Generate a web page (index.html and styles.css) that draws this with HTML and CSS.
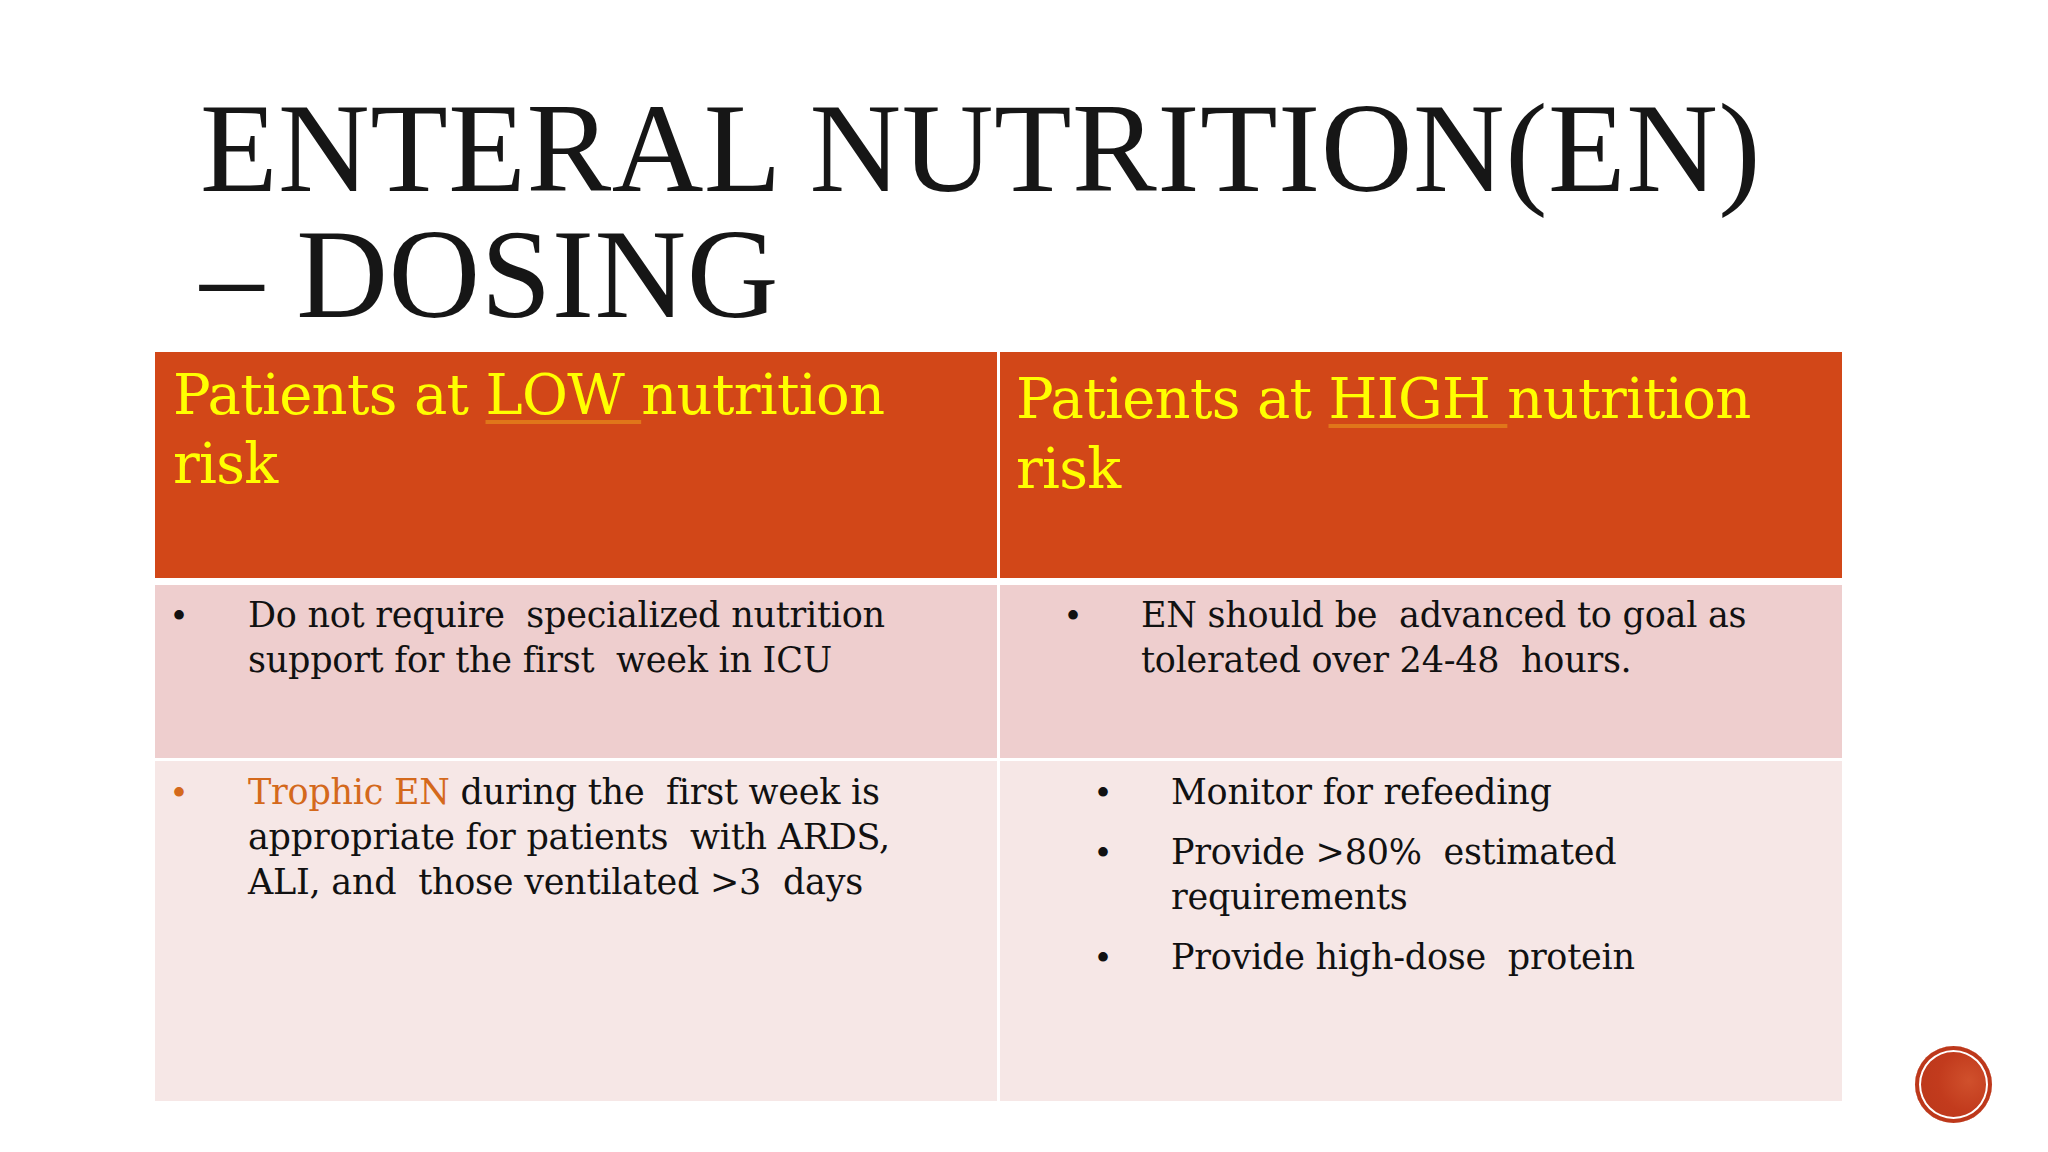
FILE: index.html
```html
<!DOCTYPE html>
<html lang="en">
<head>
<meta charset="utf-8">
<title>Enteral Nutrition (EN) – Dosing</title>
<link rel="stylesheet" href="styles.css">
</head>
<body>
<div class="slide">
  <h1 class="title">ENTERAL NUTRITION(EN)<br>– DOSING</h1>
  <div class="table">
    <div class="cell head head-left">Patients at <span class="u">LOW </span>nutrition<br>risk</div>
    <div class="cell head head-right">Patients at <span class="u">HIGH </span>nutrition<br>risk</div>

    <div class="cell row1 left">
      <ul class="list list-left">
        <li><span class="dot">•</span><span class="txt">Do not require&nbsp; specialized nutrition support for the first&nbsp; week in ICU</span></li>
      </ul>
    </div>
    <div class="cell row1 right">
      <ul class="list list-r1">
        <li><span class="dot">•</span><span class="txt">EN should be&nbsp; advanced to goal as tolerated over 24-48&nbsp; hours.</span></li>
      </ul>
    </div>

    <div class="cell row2 left">
      <ul class="list list-left">
        <li><span class="dot accent">•</span><span class="txt"><span class="accent">Trophic EN</span> during the&nbsp; first week is appropriate for patients&nbsp; with ARDS, ALI, and&nbsp; those ventilated &gt;3&nbsp; days</span></li>
      </ul>
    </div>
    <div class="cell row2 right">
      <ul class="list list-r2">
        <li><span class="dot">•</span><span class="txt">Monitor for refeeding</span></li>
        <li><span class="dot">•</span><span class="txt">Provide &gt;80%&nbsp; estimated requirements</span></li>
        <li><span class="dot">•</span><span class="txt">Provide high-dose&nbsp; protein</span></li>
      </ul>
    </div>
  </div>
  <div class="slide-num"></div>
</div>
</body>
</html>
```

FILE: styles.css
```css
* { box-sizing: border-box; }

html, body {
  margin: 0;
  padding: 0;
  background: #ffffff;
}

.slide {
  position: relative;
  width: 2048px;
  height: 1152px;
  overflow: hidden;
  background: #ffffff;
  padding-top: 85px;
}

.title {
  margin: 0 0 15px 0;
  padding-left: 200px;
  font-family: "Liberation Serif", "Times New Roman", serif;
  font-weight: normal;
  font-size: 127px;
  line-height: 126px;
  color: #161616;
  letter-spacing: 0.5px;
  height: 252px;
}

.table {
  margin-left: 155px;
  width: 1687px;
  display: grid;
  grid-template-columns: 842px 842px;
  grid-template-rows: 230px 173px 340px;
  column-gap: 3px;
  row-gap: 3px;
  background: #ffffff;
}

.cell {
  font-family: "DejaVu Serif", "Liberation Serif", serif;
}

.head {
  background: #d24718;
  border-bottom: 4px solid #ffffff;
  color: #ffff00;
  font-size: 56px;
  line-height: 69px;
  letter-spacing: -0.7px;
  padding-top: 8px;
}

.head-left { padding-left: 18px; }
.head-right { padding-left: 16px; padding-top: 12px; line-height: 70px; }

.u {
  text-decoration: underline;
  text-decoration-color: #e0761a;
  text-decoration-thickness: 4px;
  text-underline-offset: 6px;
}

.row1 { background: #eecece; }
.row2 { background: #f6e7e6; }

.list {
  list-style: none;
  margin: 0;
  padding: 0;
  font-size: 35px;
  line-height: 45px;
  letter-spacing: -0.25px;
  color: #111111;
}

.list li {
  display: flex;
  align-items: flex-start;
}

.list li + li { margin-top: 15px; }

.dot {
  flex: none;
  font-family: "Liberation Serif", serif;
  font-size: 40px;
}

.txt { flex: 1; }

.list-left { padding: 8px 60px 0 17px; }
.list-left .dot { width: 76px; }

.row2 .list-left { padding-top: 9px; }

.list-r1 { padding: 8px 60px 0 66px; }
.list-r1 .dot { width: 75px; }

.list-r2 { padding: 9px 60px 0 96px; }
.list-r2 .dot { width: 75px; }

.accent { color: #d4691c; }

.slide-num {
  position: absolute;
  left: 1915px;
  top: 1046px;
  width: 77px;
  height: 77px;
  border-radius: 50%;
  background: radial-gradient(circle at 70% 45%, #d0502c 0%, #c23b1d 45%, #b8361a 100%);
  box-shadow: inset 0 0 0 4px #bd381b, inset 0 0 0 6px #ffffff;
}
```
